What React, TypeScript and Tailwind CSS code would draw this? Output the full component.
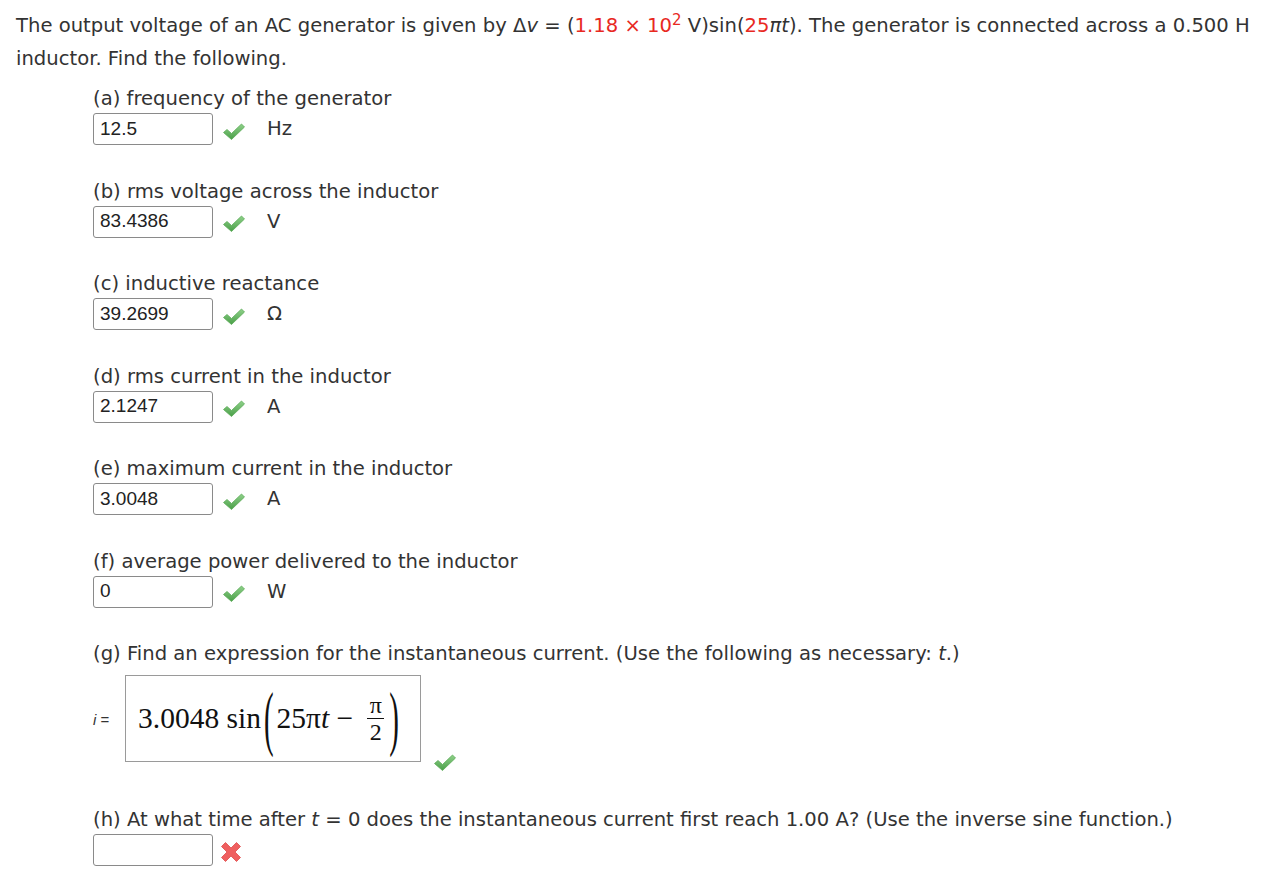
import React from 'react';

const body = { fontFamily: '"DejaVu Sans", Verdana, sans-serif' };
const inputFont = { fontFamily: '"Liberation Sans", Arial, sans-serif' };
const serif = { fontFamily: '"Liberation Serif", "Times New Roman", serif' };

function Check(): JSX.Element {
  return (
    <svg width="24" height="20" viewBox="0 0 24 20" className="shrink-0">
      <defs>
        <linearGradient id="chk" x1="0" y1="0" x2="0" y2="1">
          <stop offset="0" stopColor="#8fd18a" />
          <stop offset="1" stopColor="#4a9f48" />
        </linearGradient>
      </defs>
      <path
        d="M1.5 10.5 L5 7.5 L9.5 11.5 L19.5 2 L22.5 5 L9.5 17.5 Z"
        fill="url(#chk)"
        stroke="#5aab57"
        strokeWidth="0.8"
        strokeLinejoin="round"
      />
    </svg>
  );
}

function Cross(): JSX.Element {
  return (
    <svg width="24" height="24" viewBox="0 0 24 24" className="shrink-0">
      <path
        d="M2.5 6.5 L6.5 2.5 L12 8 L17.5 2.5 L21.5 6.5 L16 12 L21.5 17.5 L17.5 21.5 L12 16 L6.5 21.5 L2.5 17.5 L8 12 Z"
        fill="#ef5f5f"
        stroke="#e04a4a"
        strokeWidth="0.8"
        strokeLinejoin="round"
      />
    </svg>
  );
}

interface PartProps {
  letter: string;
  label: string;
  value: string;
  unit: string;
}

function Part({ letter, label, value, unit }: PartProps): JSX.Element {
  return (
    <div className="mb-[32.5px]">
      <div className="h-[28px] leading-[28px] whitespace-nowrap">
        ({letter}) {label}
      </div>
      <div className="flex h-[32px] items-center">
        <div
          className="flex h-[32px] w-[120px] items-center rounded-[3px] border border-[#8a8a8a] bg-white pl-[6px] text-[19px] text-[#222]"
          style={inputFont}
        >
          {value}
        </div>
        <div className="ml-[9px] mt-[5px]">
          <Check />
        </div>
        <span className="ml-[21px]">{unit}</span>
      </div>
    </div>
  );
}

const parts: PartProps[] = [
  { letter: 'a', label: 'frequency of the generator', value: '12.5', unit: 'Hz' },
  { letter: 'b', label: 'rms voltage across the inductor', value: '83.4386', unit: 'V' },
  { letter: 'c', label: 'inductive reactance', value: '39.2699', unit: 'Ω' },
  { letter: 'd', label: 'rms current in the inductor', value: '2.1247', unit: 'A' },
  { letter: 'e', label: 'maximum current in the inductor', value: '3.0048', unit: 'A' },
  { letter: 'f', label: 'average power delivered to the inductor', value: '0', unit: 'W' },
];

export default function App(): JSX.Element {
  return (
    <div className="min-h-[874px] bg-white pl-[16px] pr-[6px] pt-[9px] text-[19.6px] text-[#333]" style={body}>
      <p className="leading-[33px]">
        The output voltage of an AC generator is given by Δ<i>v</i> = (
        <span className="text-[#e8291f]">1.18 × 10</span>
        <sup className="text-[15px] text-[#e8291f]">2</sup> V)sin(
        <span className="text-[#e8291f]">25</span>
        <i>πt</i>). The generator is connected across a 0.500 H inductor. Find the following.
      </p>

      <div className="ml-[77px] mt-[10px]">
        {parts.map((p) => (
          <Part key={p.letter} {...p} />
        ))}

        <div className="h-[28px] leading-[28px] whitespace-nowrap">
          (g) Find an expression for the instantaneous current. (Use the following as necessary: <i>t</i>.)
        </div>
        <div className="mt-[7px] flex items-end">
          <div className="flex h-[87px] items-center">
            <span className="mt-[4px] w-[32px] shrink-0 text-[15px] text-[#333]" style={inputFont}>
              <i>i</i> =
            </span>
            <div
              className="flex h-[87px] w-[296px] shrink-0 items-center whitespace-nowrap border border-[#9a9a9a] pl-[12px] text-[29.5px] text-[#111]"
              style={serif}
            >
              <span>3.0048 sin</span>
              <span className="mx-[3px] inline-block scale-y-[2.5] text-[29px] font-light leading-none">(</span>
              <span>25π<i>t</i> −</span>
              <span className="ml-[14px] flex flex-col items-center text-[24px] leading-[26px]">
                <span>π</span>
                <span className="h-[1px] w-[17px] bg-[#111]" />
                <span>2</span>
              </span>
              <span className="ml-[5px] inline-block scale-y-[2.5] text-[29px] font-light leading-none">)</span>
            </div>
          </div>
          <div className="mb-[-11px] ml-[12px]">
            <Check />
          </div>
        </div>

        <div className="mt-[44px] h-[28px] leading-[28px] whitespace-nowrap">
          (h) At what time after <i>t</i> = 0 does the instantaneous current first reach 1.00 A? (Use the inverse
          sine function.)
        </div>
        <div className="flex h-[32px] items-center">
          <div className="h-[32px] w-[120px] rounded-[3px] border border-[#8a8a8a] bg-white" />
          <div className="ml-[6px] mt-[4px]">
            <Cross />
          </div>
        </div>
      </div>
    </div>
  );
}
